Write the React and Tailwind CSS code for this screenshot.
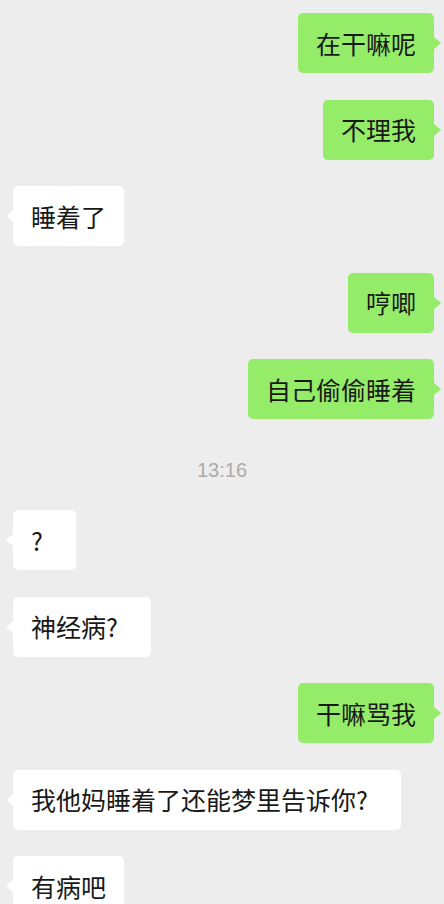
import React from 'react';

const messages = [
  { side: 'right', text: '在干嘛呢' },
  { side: 'right', text: '不理我' },
  { side: 'left', text: '睡着了' },
  { side: 'right', text: '哼唧' },
  { side: 'right', text: '自己偷偷睡着' },
  { time: '13:16' },
  { side: 'left', text: '?' },
  { side: 'left', text: '神经病?' },
  { side: 'right', text: '干嘛骂我' },
  { side: 'left', text: '我他妈睡着了还能梦里告诉你?' },
  { side: 'left', text: '有病吧' },
];

// trailing ? in the screenshot carries extra room after it
const renderText = (text) =>
  text.endsWith('?') ? (
    <>
      {text.slice(0, -1)}
      <span className="mr-[15px]">?</span>
    </>
  ) : (
    text
  );

const Bubble = ({ side, text }) => {
  const mine = side === 'right';
  return (
    <div className={`flex ${mine ? 'justify-end pr-[10px]' : 'justify-start pl-[13px]'}`}>
      <div
        className={`relative flex h-[60px] items-center rounded-[5px] px-[18px] text-[25px] leading-none text-[#191919] ${
          mine ? 'bg-[#95ec69]' : 'bg-white'
        }`}
      >
        {renderText(text)}
        {mine ? (
          <span className="absolute left-full top-1/2 -translate-y-1/2 border-y-[6px] border-l-[7px] border-y-transparent border-l-[#95ec69]" />
        ) : (
          <span className="absolute right-full top-1/2 -translate-y-1/2 border-y-[6px] border-r-[7px] border-y-transparent border-r-white" />
        )}
      </div>
    </div>
  );
};

const App = () => {
  return (
    <div
      className="min-h-screen w-full overflow-hidden bg-[#ededed] pt-[13px]"
      style={{ fontFamily: '"Noto Sans CJK SC", "Noto Sans", sans-serif' }}
    >
      <div className="flex flex-col gap-[26.5px]">
        {messages.map((m, i) =>
          m.time ? (
            <div
              key={i}
              className="mt-[14.5px] mb-[3.5px] text-center text-[20px] leading-[20px] text-[#ababab]"
              style={{ fontFamily: '"Liberation Sans", Arial, sans-serif' }}
            >
              {m.time}
            </div>
          ) : (
            <Bubble key={i} side={m.side} text={m.text} />
          )
        )}
      </div>
    </div>
  );
};

export default App;
